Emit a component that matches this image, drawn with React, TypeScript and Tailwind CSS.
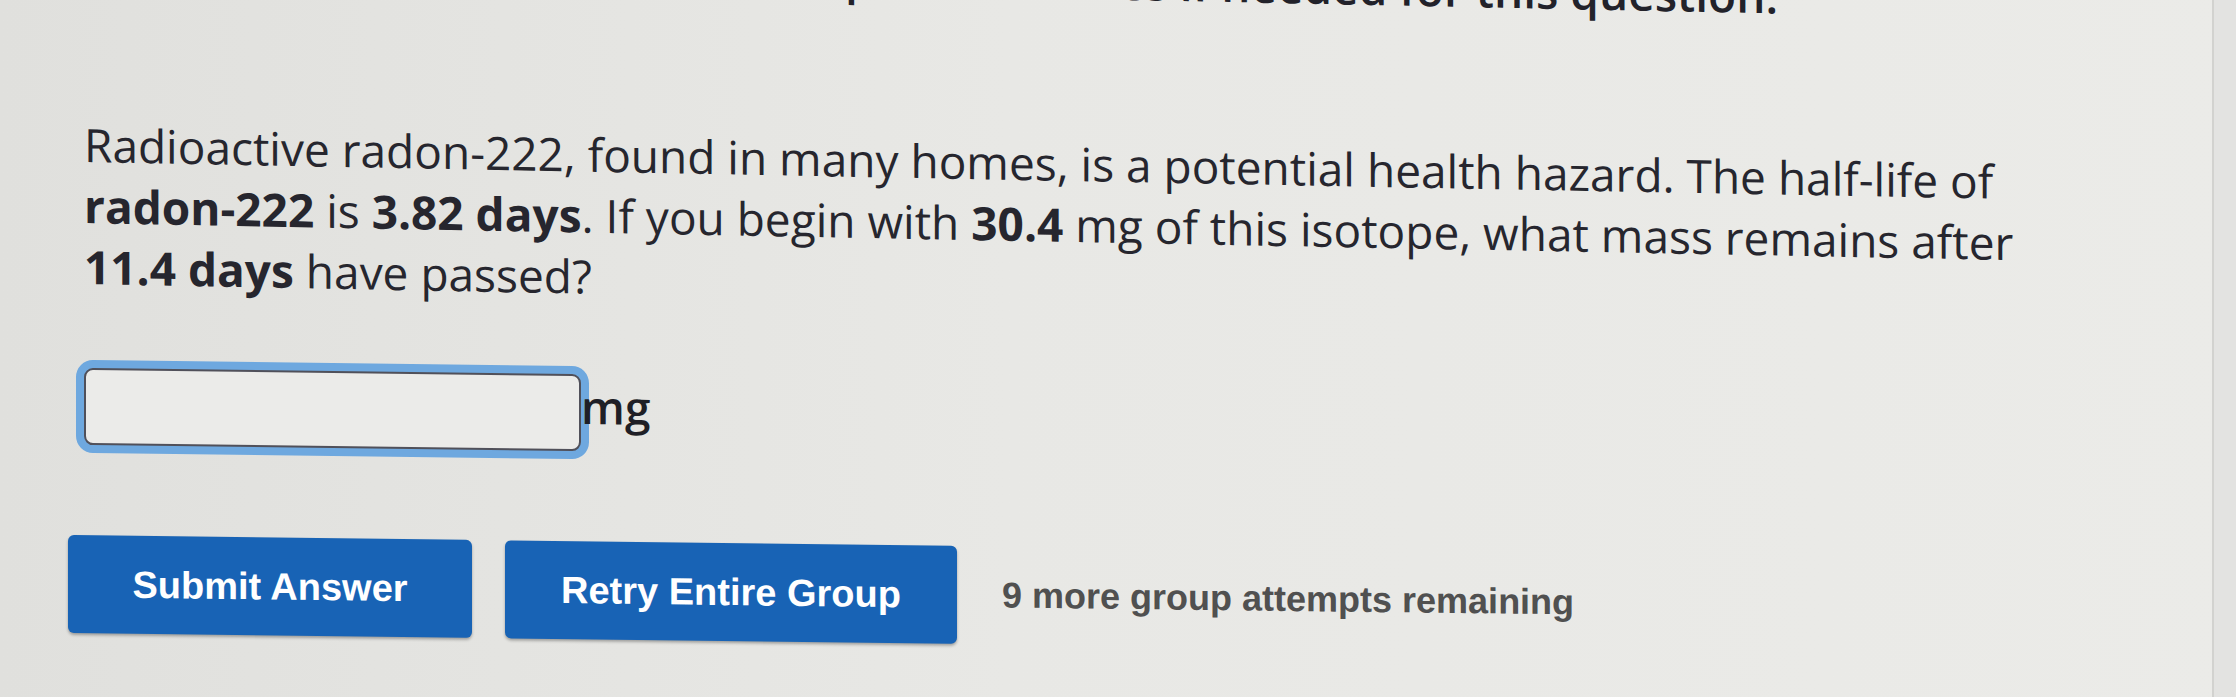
import React from "react";

export default function App() {
  return (
    <div className="w-[2236px] h-[697px] overflow-hidden flex bg-[linear-gradient(90deg,#e0e0dd,#e8e8e5_45%,#ebebe8)]">
      <div className="w-[2212px] h-full flex flex-col pl-[84px] font-['Open_Sans',sans-serif] text-[#26262e]">
        <div className="-mt-[70px] h-[61px] w-[1694px] flex justify-end origin-top-left skew-y-[1.2deg]">
          <div className="whitespace-nowrap text-[46px] leading-[61px] font-semibold text-[#22222a]">
            Use the References to access important values if needed for this question.
          </div>
        </div>

        <p className="mt-[123px] w-[1960px] text-[46px] leading-[61px] origin-top-left skew-y-[1.1deg]">
          Radioactive radon-222, found in many homes, is a potential health hazard. The half-life of{" "}
          <span className="font-bold">radon-222</span> is <span className="font-bold">3.82 days</span>. If you
          begin with <span className="font-bold">30.4</span> mg of this isotope, what mass remains after{" "}
          <span className="font-bold">11.4 days</span> have passed?
        </p>

        <div className="mt-[71px] flex items-start origin-top-left skew-y-[0.7deg]">
          <div className="w-[497px] h-[77px] rounded-[9px] border-2 border-[#50505a] bg-[#ebebe9] ring-[8px] ring-[#6ea8df]" />
          <span className="mt-[2px] text-[46px] leading-[61px] font-semibold text-[#1f1f26]">mg</span>
        </div>

        <div className="mt-[90px] -ml-[16px] flex items-center origin-top-left skew-y-[0.7deg] font-['Liberation_Sans',Arial,sans-serif] font-bold">
          <button className="w-[404px] h-[98px] rounded-[6px] bg-[#1863b5] text-white text-[38px] shadow-[0_2px_3px_rgba(0,0,0,0.3)]">
            Submit Answer
          </button>
          <button className="ml-[33px] w-[452px] h-[98px] rounded-[6px] bg-[#1863b5] text-white text-[38px] shadow-[0_2px_3px_rgba(0,0,0,0.3)]">
            Retry Entire Group
          </button>
          <span className="ml-[45px] text-[36px] text-[#505050]">9 more group attempts remaining</span>
        </div>
      </div>
      <div className="flex-1 h-full bg-[#e3e3e1] border-l-2 border-[#d2d2cf]" />
    </div>
  );
}
